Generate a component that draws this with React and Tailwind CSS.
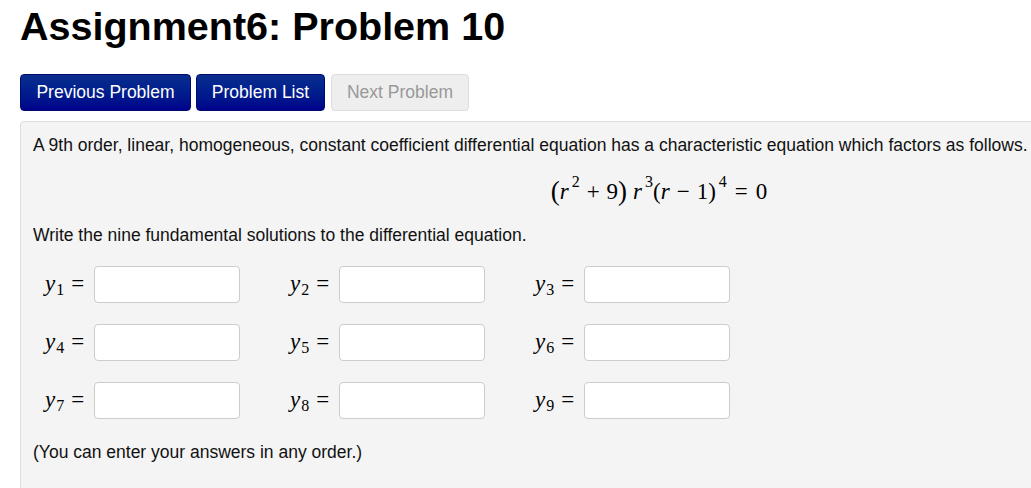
const sans = { fontFamily: '"Liberation Sans", Arial, sans-serif' }

function Y({ n }) {
  return (
    <span className="font-['Liberation_Serif',serif] text-[23px] text-black whitespace-nowrap">
      <i>y</i>
      <span className="text-[16px] relative top-[4px] ml-[1px]">{n}</span>
      <span className="ml-[7px]">=</span>
    </span>
  )
}

function Cell({ n }) {
  return (
    <div className="w-[245px] flex items-center">
      <div className="w-[49px]">
        <Y n={n} />
      </div>
      <input
        type="text"
        className="w-[146px] h-[37px] bg-white border border-[#cccccc] rounded-[4px] outline-none"
      />
    </div>
  )
}

function Sup({ children }) {
  return <span className="text-[16px] relative -top-[10px] ml-[3px]">{children}</span>
}

export default function App() {
  return (
    <div className="w-[1031px] h-[488px] overflow-hidden bg-white font-['Liberation_Sans',Arial,sans-serif]">
      <div className="pl-5 pt-[5px] w-[1400px]">
        {/* title */}
        <h1 className="text-[39.5px] font-bold leading-[42px] text-black">Assignment6: Problem 10</h1>

        {/* nav buttons */}
        <div className="flex mt-[27px] h-[37px]">
          <button className="w-[171px] h-[37px] rounded-[4px] bg-linear-to-b from-[#0b2d8e] to-[#00008b] border border-[#000a6b] text-white text-[17.5px]">
            Previous Problem
          </button>
          <button className="ml-[5px] w-[129px] h-[37px] rounded-[4px] bg-linear-to-b from-[#0b2d8e] to-[#00008b] border border-[#000a6b] text-white text-[17.5px]">
            Problem List
          </button>
          <button className="ml-[6px] w-[138px] h-[37px] rounded-[4px] bg-[#eeeeee] border border-[#dddddd] text-[#999999] text-[17.5px]">
            Next Problem
          </button>
        </div>

        {/* problem panel */}
        <div className="mt-[10px] w-[1278px] h-[400px] bg-[#f4f4f4] border border-[#dddddd] rounded-tl-[4px] px-[12px] pt-[12px] text-[17.5px] leading-[22px] text-[#111]">
          <p>A 9th order, linear, homogeneous, constant coefficient differential equation has a characteristic equation which factors as follows.</p>

          <div className="mt-[21px] h-[30px] flex items-center justify-center font-['Liberation_Serif',serif] text-[23px] text-black">
            <span className="text-[27px] leading-none relative -top-[1px]">(</span>
            <i>r</i>
            <Sup>2</Sup>
            <span className="mx-[7px]">+</span>
            <span>9</span>
            <span className="text-[27px] leading-none relative -top-[1px]">)</span>
            <i className="ml-[6px]">r</i>
            <Sup>3</Sup>
            <span>(</span>
            <i>r</i>
            <span className="mx-[7px]">−</span>
            <span>1</span>
            <span>)</span>
            <Sup>4</Sup>
            <span className="mx-[8px]">=</span>
            <span>0</span>
          </div>

          <p className="mt-[17px]">Write the nine fundamental solutions to the differential equation.</p>

          {/* answer blanks */}
          <div className="mt-[20px] ml-[12px] flex flex-col gap-y-[21px]">
            <div className="flex">
              <Cell n={1} />
              <Cell n={2} />
              <Cell n={3} />
            </div>
            <div className="flex">
              <Cell n={4} />
              <Cell n={5} />
              <Cell n={6} />
            </div>
            <div className="flex">
              <Cell n={7} />
              <Cell n={8} />
              <Cell n={9} />
            </div>
          </div>

          <p className="mt-[22px]" style={sans}>(You can enter your answers in any order.)</p>
        </div>
      </div>
    </div>
  )
}
